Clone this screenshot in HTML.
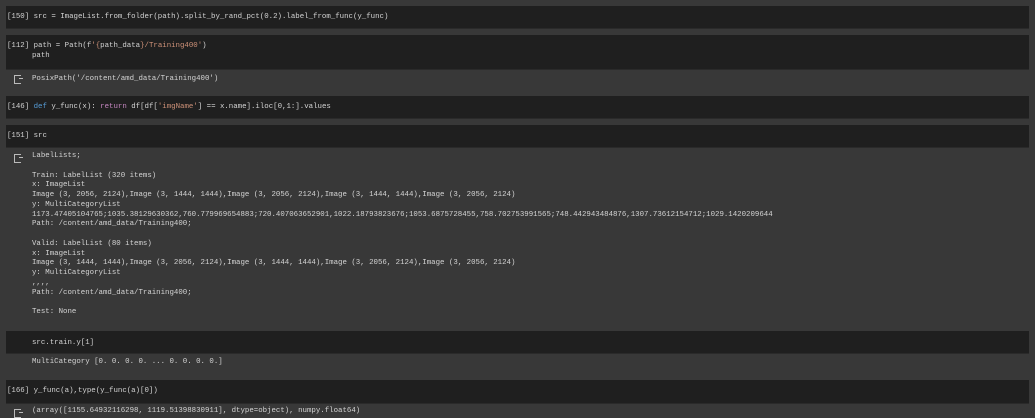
<!DOCTYPE html>
<html><head><meta charset="utf-8"><style>
html,body{margin:0;padding:0;}
body{width:1035px;height:418px;background:#383838;position:relative;overflow:hidden;font-family:"Liberation Mono",monospace;font-size:7.4px;color:#d4d4d4;}
.c{position:absolute;left:6px;width:1023px;background:#1f1f1f;border-bottom:1px solid #2a2a2a;}
.t{position:absolute;white-space:pre;line-height:10px;}
.k{color:#569cd6}.p{color:#c586c0}.s{color:#ce9178}.y{color:#dcdcaa}
.ic{position:absolute;left:14px;width:6px;height:7px;border:1px solid #bbb;border-right:none;}
.ic:after{content:"";position:absolute;left:4px;top:2px;width:4px;height:1px;background:#bbb;}
</style></head><body>
<div class="c" style="top:6px;height:22px"></div>
<div class="t" style="left:7px;top:12px">[150] src = ImageList.from_folder(path).split_by_rand_pct(0.2).label_from_func(y_func)</div>
<div class="c" style="top:35px;height:34px"></div>
<div class="t" style="left:7px;top:41px">[112] path = Path(f<span class="s">'{</span>path_data<span class="s">}/Training400'</span>)</div>
<div class="t" style="left:32px;top:51px">path</div>
<div class="ic" style="top:75px"></div>
<div class="t" style="left:32px;top:74px">PosixPath('/content/amd_data/Training400')</div>
<div class="c" style="top:96px;height:22px"></div>
<div class="t" style="left:7px;top:102px">[146] <span class="k">def</span> y_func(x): <span class="p">return</span> df[df[<span class="s">'imgName'</span>] == x.name].iloc[0,1:].values</div>
<div class="c" style="top:125px;height:22px"></div>
<div class="t" style="left:7px;top:131px">[151] src</div>
<div class="ic" style="top:154px"></div>
<div class="t" style="left:32px;top:152px;line-height:9.75px">LabelLists;

Train: LabelList (320 items)
x: ImageList
Image (3, 2056, 2124),Image (3, 1444, 1444),Image (3, 2056, 2124),Image (3, 1444, 1444),Image (3, 2056, 2124)
y: MultiCategoryList
1173.47405104765;1035.38129630362,760.779969654883;720.407063652901,1022.18793823676;1053.6875728455,758.702753991565;748.442943484876,1307.73612154712;1029.1420209644
Path: /content/amd_data/Training400;

Valid: LabelList (80 items)
x: ImageList
Image (3, 1444, 1444),Image (3, 2056, 2124),Image (3, 1444, 1444),Image (3, 2056, 2124),Image (3, 2056, 2124)
y: MultiCategoryList
,,,,
Path: /content/amd_data/Training400;

Test: None</div>
<div class="c" style="top:331px;height:22px"></div>
<div class="t" style="left:32px;top:338px">src.train.y[1]</div>
<div class="t" style="left:32px;top:357px">MultiCategory [0. 0. 0. 0. ... 0. 0. 0. 0.]</div>
<div class="c" style="top:380px;height:23px"></div>
<div class="t" style="left:7px;top:386px">[166] y_func(a),type(y_func(a)[0])</div>
<div class="ic" style="top:409px"></div>
<div class="t" style="left:32px;top:406px">(array([1155.64932116298, 1119.51398830911], dtype=object), numpy.float64)</div>
</body></html>
